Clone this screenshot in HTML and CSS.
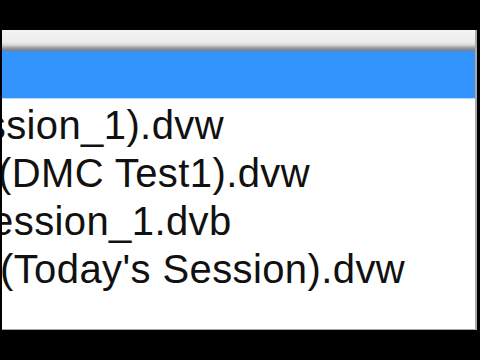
FILE: index.html
```html
<!DOCTYPE html>
<html>
<head>
<meta charset="utf-8">
<link rel="stylesheet" href="styles.css">
</head>
<body>
<div class="panel">
  <div class="header"></div>
  <ul class="list">
    <li class="row selected"><span class="label"></span></li>
    <li class="row"><span class="label r1">Session_1).dvw</span></li>
    <li class="row"><span class="label r2">(DMC Test1).dvw</span></li>
    <li class="row"><span class="label r3">Session_1.dvb</span></li>
    <li class="row"><span class="label r4">(Today's Session).dvw</span></li>
  </ul>
</div>
</body>
</html>
```

FILE: styles.css
```css
html, body {
  margin: 0;
  padding: 0;
  background: #000;
}
body {
  width: 480px;
  height: 360px;
  overflow: hidden;
}
.panel {
  margin: 30px 3px 0 2px;
  height: 299px;
  background: #fff;
  border-right: 2px solid #a8a8a8;
  border-bottom: 1px solid #a8a8a8;
  overflow: hidden;
  display: flex;
  flex-direction: column;
}
.header {
  height: 21px;
  flex: none;
  background: linear-gradient(to bottom, #f4f4f4 0, #ececec 12px, #d8d8d8 15px, #9a9a9a 18px, #7d7d7d 21px);
}
.list {
  list-style: none;
  margin: 0;
  padding: 0;
}
.row {
  height: 48px;
  line-height: 48px;
  font-family: "Liberation Sans", Arial, sans-serif;
  font-size: 40px;
  letter-spacing: 0.4px;
  color: #111;
  white-space: nowrap;
  padding-top: 2px;
  box-sizing: border-box;
}
.row.selected {
  background: #3394fd;
  border-bottom: 1px solid #b9dcff;
}
.label {
  display: inline-block;
}
.r1 { margin-left: -66px; }
.r2 { margin-left: -4px; }
.r3 { margin-left: -38px; }
.r4 { margin-left: -2px; }
```
